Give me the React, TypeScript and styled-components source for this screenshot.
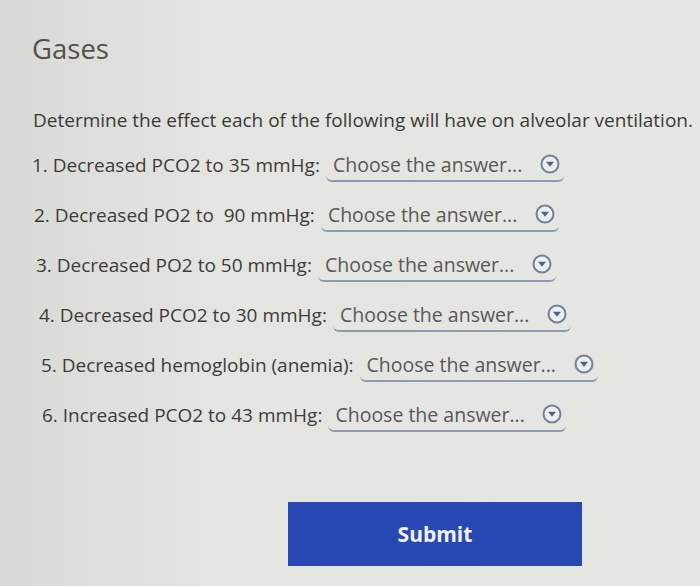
import { ReactElement } from 'react';
import styled, { createGlobalStyle } from 'styled-components';

const GlobalStyle = createGlobalStyle`
  html, body {
    margin: 0;
    padding: 0;
    background: #e2e2df;
  }
  body {
    font-family: 'Open Sans', 'Liberation Sans', sans-serif;
  }
`;

const QUESTIONS = [
  { label: '1. Decreased PCO2 to 35 mmHg:', indent: 0 },
  { label: '2. Decreased PO2 to  90 mmHg:', indent: 2 },
  { label: '3. Decreased PO2 to 50 mmHg:', indent: 4 },
  { label: '4. Decreased PCO2 to 30 mmHg:', indent: 7 },
  { label: '5. Decreased hemoglobin (anemia):', indent: 9 },
  { label: '6. Increased PCO2 to 43 mmHg:', indent: 10 },
];

const DropIcon = (): ReactElement => (
  <svg width="20" height="20" viewBox="0 0 20 20">
    <circle cx="10" cy="10" r="8.5" fill="#eceef1" stroke="#6f8299" strokeWidth="2" />
    <path d="M6 7.8 L14 7.8 L10 12.8 Z" fill="#4d6384" />
  </svg>
);

export default function App(): ReactElement {
  return (
    <Page>
      <GlobalStyle />
      <Title>Gases</Title>
      <Prompt>Determine the effect each of the following will have on alveolar ventilation.</Prompt>
      <List>
        {QUESTIONS.map((q) => (
          <Row key={q.label} $indent={q.indent}>
            <Label>{q.label}</Label>
            <Select>
              <SelectText>Choose the answer...</SelectText>
              <DropIcon />
            </Select>
          </Row>
        ))}
      </List>
      <Footer>
        <SubmitButton type="button">Submit</SubmitButton>
      </Footer>
    </Page>
  );
}

const Page = styled.div`
  width: 700px;
  height: 586px;
  box-sizing: border-box;
  padding: 31px 0 0 32px;
  background: linear-gradient(90deg, #d9d9d6 0%, #e4e4e1 30%, #e6e6e3 100%);
  color: #3d3d3d;
  overflow: hidden;
`;

const Title = styled.h1`
  margin: 0;
  font-size: 27.5px;
  font-weight: 400;
  line-height: 36px;
  color: #515151;
`;

const Prompt = styled.p`
  margin: 40px 0 0 1px;
  font-size: 19px;
  line-height: 26px;
  white-space: nowrap;
  color: #3a3a3a;
`;

const List = styled.div`
  display: flex;
  flex-direction: column;
  gap: 16px;
  margin-top: 15px;
`;

const Row = styled.div<{ $indent: number }>`
  display: flex;
  align-items: center;
  gap: 6px;
  height: 34px;
  padding-left: ${(p) => p.$indent}px;
`;

const Label = styled.span`
  font-size: 19px;
  white-space: pre;
  color: #3c3c3c;
`;

const Select = styled.div`
  display: flex;
  align-items: center;
  justify-content: space-between;
  width: 238px;
  height: 34px;
  box-sizing: border-box;
  padding: 0 4px 0 7px;
  border-bottom: 2px solid #8d9bb0;
  border-radius: 0 0 6px 6px;
`;

const SelectText = styled.span`
  font-size: 19.5px;
  color: #585858;
  white-space: nowrap;
`;

const Footer = styled.div`
  display: flex;
  padding-left: 256px;
  margin-top: 70px;
`;

const SubmitButton = styled.button`
  width: 294px;
  height: 64px;
  border: none;
  background: #2748b2;
  color: #f2f2f2;
  font-family: 'Open Sans', 'Liberation Sans', sans-serif;
  font-size: 21px;
  font-weight: 700;
  cursor: pointer;
`;
